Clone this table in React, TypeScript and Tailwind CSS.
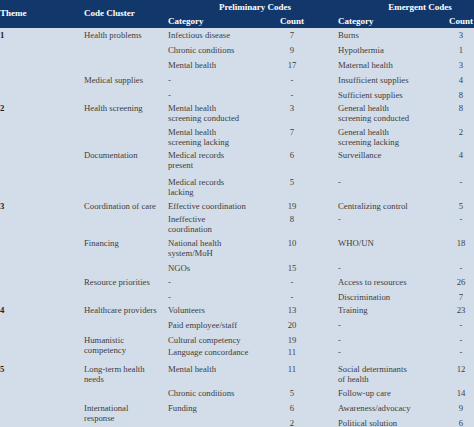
type Row = {
  h: number;
  theme?: string;
  cluster?: string;
  pc?: string;
  pn?: string;
  ec?: string;
  en?: string;
};

const rows: Row[] = [
  { h: 15, theme: "1", cluster: "Health problems", pc: "Infectious disease", pn: "7", ec: "Burns", en: "3" },
  { h: 15, pc: "Chronic conditions", pn: "9", ec: "Hypothermia", en: "1" },
  { h: 15, pc: "Mental health", pn: "17", ec: "Maternal health", en: "3" },
  { h: 15, cluster: "Medical supplies", pc: "-", pn: "-", ec: "Insufficient supplies", en: "4" },
  { h: 13, pc: "-", pn: "-", ec: "Sufficient supplies", en: "8" },
  { h: 24, theme: "2", cluster: "Health screening", pc: "Mental health\nscreening conducted", pn: "3", ec: "General health\nscreening conducted", en: "8" },
  { h: 23, pc: "Mental health\nscreening lacking", pn: "7", ec: "General health\nscreening lacking", en: "2" },
  { h: 27, cluster: "Documentation", pc: "Medical records\npresent", pn: "6", ec: "Surveillance", en: "4" },
  { h: 24, pc: "Medical records\nlacking", pn: "5", ec: "-", en: "-" },
  { h: 13, theme: "3", cluster: "Coordination of care", pc: "Effective coordination", pn: "19", ec: "Centralizing control", en: "5" },
  { h: 24, pc: "Ineffective\ncoordination", pn: "8", ec: "-", en: "-" },
  { h: 25, cluster: "Financing", pc: "National health\nsystem/MoH", pn: "10", ec: "WHO/UN", en: "18" },
  { h: 14, pc: "NGOs", pn: "15", ec: "-", en: "-" },
  { h: 15, cluster: "Resource priorities", pc: "-", pn: "-", ec: "Access to resources", en: "26" },
  { h: 13, pc: "-", pn: "-", ec: "Discrimination", en: "7" },
  { h: 15, theme: "4", cluster: "Healthcare providers", pc: "Volunteers", pn: "13", ec: "Training", en: "23" },
  { h: 15, pc: "Paid employee/staff", pn: "20", ec: "-", en: "-" },
  { h: 12, cluster: "Humanistic\ncompetency", pc: "Cultural competency", pn: "19", ec: "-", en: "-" },
  { h: 17, pc: "Language concordance", pn: "11", ec: "-", en: "-" },
  { h: 24, theme: "5", cluster: "Long-term health\nneeds", pc: "Mental health", pn: "11", ec: "Social determinants\nof health", en: "12" },
  { h: 15, pc: "Chronic conditions", pn: "5", ec: "Follow-up care", en: "14" },
  { h: 15, cluster: "International\nresponse", pc: "Funding", pn: "6", ec: "Awareness/advocacy", en: "9" },
  { h: 15, pn: "2", ec: "Political solution", en: "6" },
];

function BodyRow({ r }: { r: Row }) {
  return (
    <div className="flex pt-[2px] leading-[10px]" style={{ height: r.h }}>
      <div className="w-[84px] shrink-0 font-bold text-[#222]">{r.theme}</div>
      <div className="w-[84px] shrink-0 whitespace-pre-line">{r.cluster}</div>
      <div className="w-[108px] shrink-0 whitespace-pre-line">{r.pc}</div>
      <div className="w-[32px] shrink-0 text-center">{r.pn}</div>
      <div className="w-[30px] shrink-0" />
      <div className="w-[108px] shrink-0 whitespace-pre-line">{r.ec}</div>
      <div className="w-[30px] shrink-0 text-center">{r.en}</div>
    </div>
  );
}

export default function App() {
  return (
    <div className="h-[427px] w-[474px] overflow-hidden bg-[#d3dde9] font-['Liberation_Serif',serif]">
      <div className="w-[510px]">
        <div className="flex h-[28px] bg-[#12376a] text-[9px] font-bold text-white">
          <div className="flex w-[84px] shrink-0 items-center">Theme</div>
          <div className="flex w-[84px] shrink-0 items-center">Code Cluster</div>
          <div className="flex w-[170px] shrink-0 flex-col">
            <div className="flex h-[15px] items-center justify-center pl-[4px]">Preliminary Codes</div>
            <div className="flex h-[13px] items-center">
              <div className="w-[108px]">Category</div>
              <div className="w-[32px] text-center">Count</div>
            </div>
          </div>
          <div className="flex w-[164px] shrink-0 flex-col">
            <div className="flex h-[15px] items-center justify-center">Emergent Codes</div>
            <div className="flex h-[13px] items-center">
              <div className="w-[108px]">Category</div>
              <div className="w-[30px] text-center">Count</div>
            </div>
          </div>
        </div>
        <div className="text-[8.7px] text-[#3d3d3d]">
          {rows.map((r, i) => (
            <BodyRow key={i} r={r} />
          ))}
        </div>
      </div>
    </div>
  );
}
